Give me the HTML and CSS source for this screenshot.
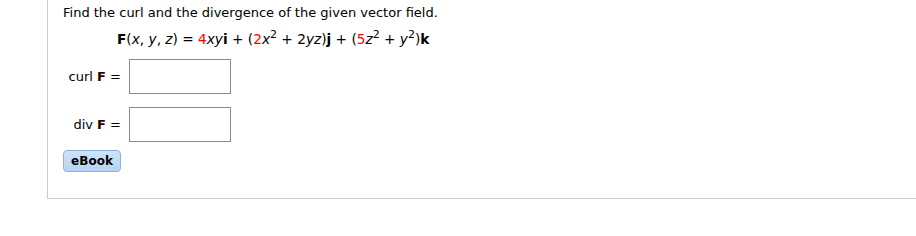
FILE: index.html
```html
<!DOCTYPE html>
<html lang="en">
<head>
  <meta charset="UTF-8">
  <title>Curl and divergence</title>
  <link rel="stylesheet" href="styles.css">
</head>
<body>
  <div class="question">
    <p class="prompt">Find the curl and the divergence of the given vector field.</p>
    <p class="equation">
      <b>F</b>(<i>x</i>, <i>y</i>, <i>z</i>) = <span class="red">4</span><i>xy</i><b>i</b> + (<span class="red">2</span><i>x</i><sup>2</sup> + 2<i>yz</i>)<b>j</b> + (<span class="red">5</span><i>z</i><sup>2</sup> + <i>y</i><sup>2</sup>)<b>k</b>
    </p>

    <div class="answer-row">
      <label for="curl">curl <b class="vec">F</b> =</label>
      <input type="text" id="curl" class="answer">
    </div>

    <div class="answer-row">
      <label for="div" class="div-label">div <b class="vec">F</b> =</label>
      <input type="text" id="div" class="answer">
    </div>

    <button class="ebook">eBook</button>
  </div>
</body>
</html>
```

FILE: styles.css
```css
body {
  margin: 0;
  font-family: 'DejaVu Sans', Verdana, sans-serif;
  font-size: 13px;
  color: #000;
  background: #fff;
}

.question {
  margin-left: 47px;
  border-left: 1px solid #cccccc;
  border-bottom: 1px solid #cccccc;
  height: 199px;
  box-sizing: border-box;
  padding: 5px 0 0 15px;
}

.prompt {
  margin: 0;
  line-height: 16px;
}

.equation {
  margin: 10px 0 0 54px;
  font-size: 13.7px;
  line-height: 16px;
}

.equation sup {
  font-size: 11px;
  line-height: 0;
}

.red {
  color: #ff0000;
}

.answer-row {
  display: flex;
  align-items: center;
  margin-top: 12px;
}

.answer-row + .answer-row {
  margin-top: 13px;
}

.answer-row label {
  width: 58px;
  text-align: right;
  padding-right: 8px;
}

.vec {
  color: #330000;
}

.answer {
  width: 102px;
  height: 35px;
  box-sizing: border-box;
  border: 1px solid #8a8a8a;
  margin: 0;
  padding: 2px 4px;
}

.ebook {
  margin-top: 8px;
  width: 58px;
  height: 22px;
  padding: 0;
  font-family: 'DejaVu Sans', Verdana, sans-serif;
  font-size: 12px;
  font-weight: bold;
  color: #000;
  border: 1px solid #8cb2dc;
  border-radius: 4px;
  background: linear-gradient(#cde3f8, #b5d4f4);
  cursor: pointer;
}
```
